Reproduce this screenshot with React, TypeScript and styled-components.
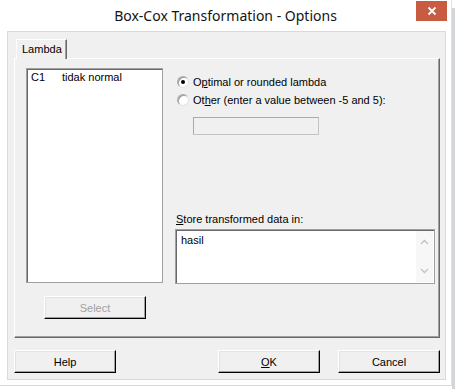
import React from 'react';
import styled, { createGlobalStyle } from 'styled-components';

const GlobalStyle = createGlobalStyle`
  html, body {
    margin: 0;
    padding: 0;
    background: #fff;
  }
  body {
    font-family: 'Liberation Sans', Arial, sans-serif;
    font-size: 11px;
    color: #000;
  }
`;

const Screen = styled.div`
  width: 455px;
  height: 389px;
  display: flex;
  background: #fff;
`;

const Window = styled.div`
  width: 452px;
  height: 386px;
  box-sizing: border-box;
  display: flex;
  flex-direction: column;
  background: #fff;
  border-right: 1px solid #e2e2e2;
  border-bottom: 1px solid #d8d8d8;
`;

const Backdrop = styled.div`
  flex: 1;
  background: #d3d6d8;
  margin-top: 8px;
`;

const TitleBar = styled.div`
  height: 31px;
  display: grid;
  grid-template-columns: 1fr auto 1fr;
  align-items: start;
`;

const Title = styled.div`
  grid-column: 2;
  font-family: 'Noto Sans', 'Open Sans', sans-serif;
  font-size: 14px;
  line-height: 20px;
  padding-top: 6px;
  color: #141414;
  white-space: nowrap;
`;

const CloseButton = styled.div`
  grid-column: 3;
  justify-self: end;
  width: 31px;
  height: 20px;
  margin-top: 1px;
  margin-right: 4px;
  background: #c75c43;
  display: flex;
  align-items: center;
  justify-content: center;
`;

const Client = styled.div`
  height: 349px;
  box-sizing: border-box;
  margin: 0 5px 0 7px;
  padding: 7px 5px 0 6px;
  background: #f0f0f0;
  border: 1px solid #dadada;
  display: flex;
  flex-direction: column;
`;

const TabStrip = styled.div`
  display: flex;
  padding-left: 2px;
`;

const Tab = styled.div`
  position: relative;
  z-index: 1;
  width: 51px;
  height: 20px;
  box-sizing: border-box;
  margin-bottom: -1px;
  padding: 2px 0 0 5px;
  line-height: 14px;
  background: #f0f0f0;
  border-top: 1px solid #fff;
  border-left: 1px solid #fff;
  border-right: 1px solid #696969;
  box-shadow: inset -1px 0 0 #a0a0a0;
`;

const TabPanel = styled.div`
  height: 280px;
  box-sizing: border-box;
  border: 1px solid;
  border-color: #fff #696969 #696969 #fff;
  box-shadow: inset -1px -1px 0 #a0a0a0;
  padding: 9px 0 0 11px;
  display: grid;
  grid-template-columns: 137px 1fr;
  column-gap: 14px;
  align-items: start;
`;

const LeftColumn = styled.div`
  display: flex;
  flex-direction: column;
`;

const Sunken = styled.div`
  box-sizing: border-box;
  background: #fff;
  border: 1px solid #a0a0a0;
  box-shadow: inset 1px 1px 0 #696969;
`;

const ColumnList = styled(Sunken)`
  height: 215px;
  padding: 2px 0 0 4px;
`;

const ListItem = styled.div`
  display: grid;
  grid-template-columns: 31px 1fr;
  line-height: 13px;
`;

const ClassicButton = styled.div<{ $width?: number; $disabled?: boolean }>`
  width: ${({ $width }) => $width ?? 102}px;
  height: 23px;
  box-sizing: border-box;
  display: flex;
  align-items: center;
  justify-content: center;
  background: #f0f0f0;
  border: 1px solid;
  border-color: #fff #000 #000 #fff;
  box-shadow: inset -1px -1px 0 #a0a0a0, inset 1px 1px 0 #e3e3e3;
  color: ${({ $disabled }) => ($disabled ? '#a0a0a0' : '#000')};
`;

const SelectButton = styled(ClassicButton)`
  margin: 13px 0 0 18px;
`;

const RightColumn = styled.div`
  display: flex;
  flex-direction: column;
`;

const RadioRow = styled.label<{ $first?: boolean }>`
  display: flex;
  align-items: center;
  gap: 4px;
  height: 16px;
  margin-top: ${({ $first }) => ($first ? 6 : 2)}px;
`;

const RadioCircle = styled.span<{ $checked?: boolean }>`
  position: relative;
  width: 12px;
  height: 12px;
  box-sizing: border-box;
  border-radius: 50%;
  background: #fff;
  border: 1px solid;
  border-color: #a8a8a8 #e3e3e3 #e3e3e3 #a8a8a8;
  box-shadow: inset 1px 1px 0 #9a9a9a;
  &::after {
    content: '';
    display: ${({ $checked }) => ($checked ? 'block' : 'none')};
    position: absolute;
    left: 3px;
    top: 3px;
    width: 4px;
    height: 4px;
    border-radius: 50%;
    background: #000;
  }
`;

const ValueInput = styled.div`
  width: 126px;
  height: 18px;
  box-sizing: border-box;
  margin: 9px 0 0 16px;
  background: #f0f0f0;
  border: 1px solid #a9a9a9;
  border-right-color: #c4c4c4;
  border-bottom-color: #c4c4c4;
`;

const StoreLabel = styled.div`
  margin: 77px 0 0 -1px;
  line-height: 14px;
`;

const StoreBox = styled(Sunken)`
  width: 260px;
  height: 55px;
  margin: 3px 0 0 -2px;
  display: flex;
`;

const StoreText = styled.div`
  flex: 1;
  padding: 4px 0 0 5px;
  line-height: 13px;
`;

const ScrollTrack = styled.div`
  width: 17px;
  margin: 1px 1px 1px 0;
  background: #f7f7f7;
  display: flex;
  flex-direction: column;
  justify-content: space-between;
  align-items: center;
  padding: 8px 0 8px;
`;

const Footer = styled.div`
  display: flex;
  margin-top: 12px;
`;

const RightButtons = styled.div`
  display: flex;
  gap: 18px;
  margin-left: auto;
`;

const Chevron = ({ up }: { up?: boolean }) => (
  <svg width="9" height="6" viewBox="0 0 9 6">
    <path
      d={up ? 'M1 5 L4.5 1.5 L8 5' : 'M1 1 L4.5 4.5 L8 1'}
      fill="none"
      stroke="#c2c2c2"
      strokeWidth="1.3"
    />
  </svg>
);

export default function App() {
  return (
    <>
      <GlobalStyle />
      <Screen>
        <Window>
          <TitleBar>
            <Title>Box-Cox Transformation - Options</Title>
            <CloseButton>
              <svg width="10" height="10" viewBox="0 0 10 10">
                <path d="M1.5 1.5 L8.5 8.5 M8.5 1.5 L1.5 8.5" stroke="#fff" strokeWidth="1.8" />
              </svg>
            </CloseButton>
          </TitleBar>
          <Client>
            <TabStrip>
              <Tab>Lambda</Tab>
            </TabStrip>
            <TabPanel>
              <LeftColumn>
                <ColumnList>
                  <ListItem>
                    <span>C1</span>
                    <span>tidak normal</span>
                  </ListItem>
                </ColumnList>
                <SelectButton $disabled>Select</SelectButton>
              </LeftColumn>
              <RightColumn>
                <RadioRow $first>
                  <RadioCircle $checked />
                  <span>
                    O<u>p</u>timal or rounded lambda
                  </span>
                </RadioRow>
                <RadioRow>
                  <RadioCircle />
                  <span>
                    Ot<u>h</u>er (enter a value between -5 and 5):
                  </span>
                </RadioRow>
                <ValueInput />
                <StoreLabel>
                  <u>S</u>tore transformed data in:
                </StoreLabel>
                <StoreBox>
                  <StoreText>hasil</StoreText>
                  <ScrollTrack>
                    <Chevron up />
                    <Chevron />
                  </ScrollTrack>
                </StoreBox>
              </RightColumn>
            </TabPanel>
            <Footer>
              <ClassicButton>Help</ClassicButton>
              <RightButtons>
                <ClassicButton>
                  <u>O</u>K
                </ClassicButton>
                <ClassicButton>Cancel</ClassicButton>
              </RightButtons>
            </Footer>
          </Client>
        </Window>
        <Backdrop />
      </Screen>
    </>
  );
}
